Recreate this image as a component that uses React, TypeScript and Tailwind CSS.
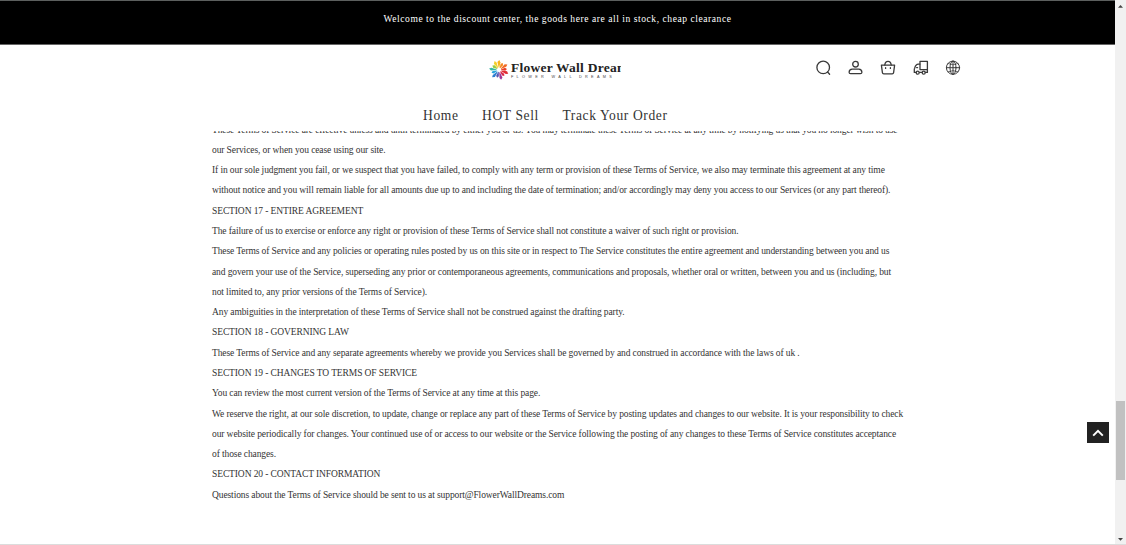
import type { ReactNode } from 'react';

const TERMS: string[] = [
  'These Terms of Service are effective unless and until terminated by either you or us. You may terminate these Terms of Service at any time by notifying us that you no longer wish to use',
  'our Services, or when you cease using our site.',
  'If in our sole judgment you fail, or we suspect that you have failed, to comply with any term or provision of these Terms of Service, we also may terminate this agreement at any time',
  'without notice and you will remain liable for all amounts due up to and including the date of termination; and/or accordingly may deny you access to our Services (or any part thereof).',
  'SECTION 17 - ENTIRE AGREEMENT',
  'The failure of us to exercise or enforce any right or provision of these Terms of Service shall not constitute a waiver of such right or provision.',
  'These Terms of Service and any policies or operating rules posted by us on this site or in respect to The Service constitutes the entire agreement and understanding between you and us',
  'and govern your use of the Service, superseding any prior or contemporaneous agreements, communications and proposals, whether oral or written, between you and us (including, but',
  'not limited to, any prior versions of the Terms of Service).',
  'Any ambiguities in the interpretation of these Terms of Service shall not be construed against the drafting party.',
  'SECTION 18 - GOVERNING LAW',
  'These Terms of Service and any separate agreements whereby we provide you Services shall be governed by and construed in accordance with the laws of uk .',
  'SECTION 19 - CHANGES TO TERMS OF SERVICE',
  'You can review the most current version of the Terms of Service at any time at this page.',
  'We reserve the right, at our sole discretion, to update, change or replace any part of these Terms of Service by posting updates and changes to our website. It is your responsibility to check',
  'our website periodically for changes. Your continued use of or access to our website or the Service following the posting of any changes to these Terms of Service constitutes acceptance',
  'of those changes.',
  'SECTION 20 - CONTACT INFORMATION',
  'Questions about the Terms of Service should be sent to us at support@FlowerWallDreams.com',
];

// clockwise from the top
const PETALS = [
  '#f8b31c', '#f58a1f', '#f06a25', '#ea4128', '#e02c34', '#d92a4a',
  '#9a3596', '#5b57b0', '#2f7fd0', '#2aa5dc', '#35b8a4', '#9ccb3b', '#f6cf2a',
];

function FlowerMark() {
  return (
    <svg viewBox="-10 -10 20 20" className="h-5 w-5 shrink-0">
      {PETALS.map((color, i) => (
        <path
          key={color}
          d={i % 2 ? 'M-0.3 -2 L-1.4 -6.2 L0 -8 L1.4 -6.2 L0.3 -2 Z' : 'M-0.3 -2.4 L-1.6 -8 L0.3 -10 L1.4 -7.8 L0.3 -2.4 Z'}
          fill={color}
          transform={`rotate(${(i * 360) / PETALS.length})`}
        />
      ))}
    </svg>
  );
}

function Icon({ children }: { children: ReactNode }) {
  return (
    <svg viewBox="0 0 16 16" className="h-4 w-4" fill="none" stroke="#3a3a3a" strokeWidth="1.3" strokeLinecap="round" strokeLinejoin="round">
      {children}
    </svg>
  );
}

function HeaderIcons() {
  return (
    <div className="flex gap-[16.5px]">
      <Icon>
        <circle cx="8.2" cy="7.4" r="6.3" />
        <path d="M12.6 12 L14.6 14.2" />
      </Icon>
      <Icon>
        <circle cx="7.5" cy="4.2" r="2.8" />
        <path d="M4.2 9.2 H10.8 Q13.7 9.4 13.9 12.2 Q13.9 13.7 12.4 13.7 H2.6 Q1.1 13.7 1.1 12.2 Q1.3 9.4 4.2 9.2 Z" />
      </Icon>
      <Icon>
        <path d="M1.4 5.2 H14.6 L13.6 12.6 Q13.4 13.8 12.2 13.8 H3.8 Q2.6 13.8 2.4 12.6 Z" />
        <path d="M4.8 5 Q5.2 1.4 8 1.4 Q10.8 1.4 11.2 5" />
        <path d="M5.6 7.7 V8.4 M10.4 7.7 V8.4" />
      </Icon>
      <Icon>
        <path d="M7 9.6 V1.4 H14.4 V9.6 H7" />
        <path d="M6.8 4.2 H5.4 Q2.6 4.3 1.7 8.2 Q1.3 8.6 1.3 9.4 V12.4 H3 M6.4 12.4 H9 M12.4 12.4 H14.4 V9.6" />
        <path d="M3.6 7.6 H4.6" />
        <circle cx="4.7" cy="12.7" r="1.5" />
        <circle cx="10.7" cy="12.7" r="1.5" />
      </Icon>
      <Icon>
        <g strokeWidth="1">
          <circle cx="8" cy="7.7" r="6.6" />
          <ellipse cx="8" cy="7.7" rx="3" ry="6.6" />
          <path d="M1.4 7.7 H14.6 M8 1.1 V14.3" />
          <path d="M3 3.6 Q8 6.2 13 3.6 M3 11.8 Q8 9.2 13 11.8" strokeWidth="0.7" />
        </g>
      </Icon>
    </div>
  );
}

function Logo() {
  return (
    <div className="mt-1 flex w-[132px] items-center overflow-hidden">
      <FlowerMark />
      <div className="ml-[2px] flex flex-col">
        <span className="whitespace-nowrap text-[13.5px] leading-[14px] font-bold tracking-[0.25px] text-[#222]">Flower Wall Dream</span>
        <span className="whitespace-nowrap font-['Liberation_Sans',sans-serif] text-[3.8px] leading-[4px] tracking-[3.3px] text-[#444]">FLOWER WALL DREAMS</span>
      </div>
    </div>
  );
}

function Scrollbar() {
  return (
    <div className="flex w-[11px] shrink-0 flex-col items-center bg-[#f1f1f1]">
      <svg viewBox="0 0 11 11" className="h-[11px] w-[11px]">
        <path d="M3 7.8 L5.5 5 L8 7.8 Z" fill="#444" />
      </svg>
      <div className="mt-[390px] h-[79px] w-[9px] bg-[#c1c1c1]" />
      <svg viewBox="0 0 11 11" className="mt-auto h-[11px] w-[11px]">
        <path d="M3 5 L5.5 7.8 L8 5 Z" fill="#444" />
      </svg>
    </div>
  );
}

export default function App() {
  return (
    <div className="relative flex h-[545px] w-[1126px] overflow-hidden border-b border-[#dcdcdc] bg-white font-['Liberation_Serif','Times_New_Roman',serif] text-[#333]">
      <div className="flex min-w-0 flex-1 flex-col">
        <div className="flex h-[45px] shrink-0 justify-center border-y border-t-[#5c5f5e] border-b-[#666] bg-black pt-[11px]">
          <p className="whitespace-nowrap text-[9.55px] leading-[14px] tracking-[0.55px] text-white">
            Welcome to the discount center, the goods here are all in stock, cheap clearance
          </p>
        </div>
        <header className="flex h-[86px] shrink-0 flex-col">
          <div className="flex h-[46px] items-center pl-[489px]">
            <Logo />
            <div className="ml-[194px]">
              <HeaderIcons />
            </div>
          </div>
          <nav className="mt-[15px] flex gap-[23.5px] pl-[423px] text-[13.52px] leading-5 tracking-[0.62px]">
            <a>Home</a>
            <a>HOT Sell</a>
            <a>Track Your Order</a>
          </nav>
        </header>
        <main className="flex-1 overflow-hidden pl-[212px]">
          <div className="-mt-[11.4px]">
            {TERMS.map((line) => (
              <p key={line} className="h-[20.29px] whitespace-nowrap text-[9.5px] leading-[20.29px] tracking-[-0.104px]">
                {line}
              </p>
            ))}
          </div>
        </main>
      </div>
      <Scrollbar />
      <button className="absolute top-[422px] left-[1087px] flex h-[21px] w-[22px] items-center justify-center bg-[#222]">
        <svg viewBox="0 0 12 8" className="h-2 w-3" fill="none" stroke="#fff" strokeWidth="2">
          <path d="M1.2 6.6 L6 1.8 L10.8 6.6" />
        </svg>
      </button>
    </div>
  );
}
